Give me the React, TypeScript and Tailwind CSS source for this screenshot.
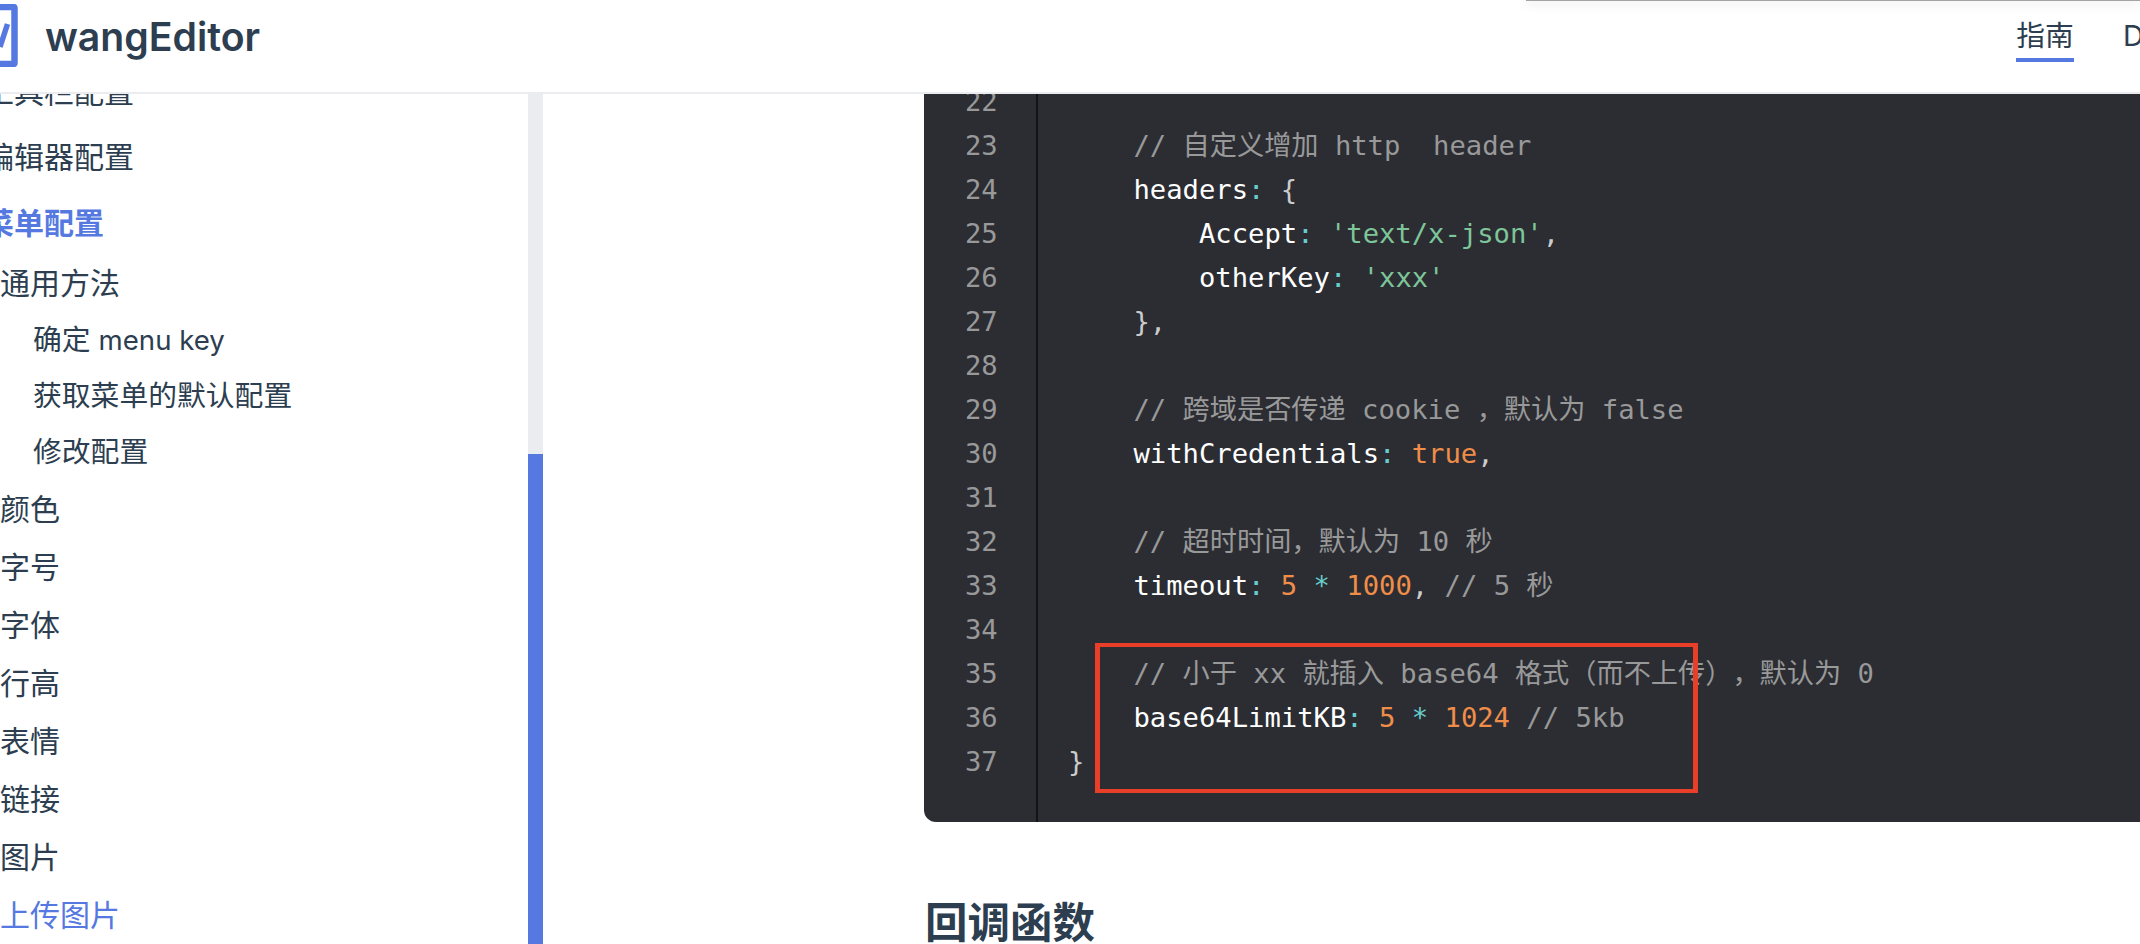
const comment = 'text-[#999999]';
const plain = 'text-white';
const punct = 'text-[#cccccc]';
const colon = 'text-[#67cdcc]';
const str = 'text-[#7ec699]';
const num = 'text-[#f08d49]';

type Token = [string, string];

const codeLines: Token[][] = [
  [],
  [['    // 自定义增加 http  header', comment]],
  [['    headers', plain], [':', colon], [' {', punct]],
  [['        Accept', plain], [':', colon], [" 'text/x-json'", str], [',', punct]],
  [['        otherKey', plain], [':', colon], [" 'xxx'", str]],
  [['    },', punct]],
  [],
  [['    // 跨域是否传递 cookie ，默认为 false', comment]],
  [['    withCredentials', plain], [':', colon], [' true', num], [',', punct]],
  [],
  [['    // 超时时间，默认为 10 秒', comment]],
  [['    timeout', plain], [':', colon], [' 5', num], [' *', colon], [' 1000', num], [',', punct], [' // 5 秒', comment]],
  [],
  [['    // 小于 xx 就插入 base64 格式（而不上传），默认为 0', comment]],
  [['    base64LimitKB', plain], [':', colon], [' 5', num], [' *', colon], [' 1024', num], [' // 5kb', comment]],
  [['}', punct]],
];

const sideRows = ['颜色', '字号', '字体', '行高', '表情', '链接', '图片'];

function Sidebar() {
  return (
    <aside className="flex h-full w-[528px] shrink-0 flex-col overflow-hidden bg-white text-[30px] text-[#2c3e50]">
      <div className="-ml-[16px] -mt-[31px] flex h-[58px] shrink-0 items-center leading-[58px]">工具栏配置</div>
      <div className="-ml-[16px] mt-[7px] flex h-[58px] shrink-0 items-center leading-[58px]">编辑器配置</div>
      <div className="-ml-[16px] mt-[8px] flex h-[58px] shrink-0 items-center font-semibold leading-[58px] text-[#5579e0]">菜单配置</div>
      <div className="mt-[2px] flex h-[58px] shrink-0 items-center leading-[58px]">通用方法</div>
      <div className="flex flex-col pl-[33px] text-[28.8px]">
        <div className="flex h-[56px] items-center leading-[56px]">确定 <span className="ml-[8px] text-[27.6px]">menu key</span></div>
        <div className="flex h-[56px] items-center leading-[56px]">获取菜单的默认配置</div>
        <div className="flex h-[56px] items-center leading-[56px]">修改配置</div>
      </div>
      {sideRows.map((t) => (
        <div key={t} className="flex h-[58px] shrink-0 items-center leading-[58px]">{t}</div>
      ))}
      <div className="flex h-[58px] shrink-0 items-center leading-[58px] text-[#5579e0]">上传图片</div>
    </aside>
  );
}

function CodeBlock() {
  return (
    <div className="relative -mt-[14px] flex h-[742px] rounded-bl-[12px] bg-[#2b2d33] font-['DejaVu_Sans_Mono','Noto_Sans_CJK_SC',monospace] text-[27.2px] leading-[44px] [text-spacing-trim:space-all]">
      <div className="w-[114px] shrink-0 border-r-2 border-[#111317] pl-[41px] text-[#999999]">
        {codeLines.map((_, i) => (
          <div key={i} className="h-[44px]">{22 + i}</div>
        ))}
      </div>
      <div className="pl-[30px]">
        {codeLines.map((tokens, i) => (
          <div key={i} className="h-[44px] whitespace-pre">
            {tokens.map(([text, cls], j) => (
              <span key={j} className={cls}>{text}</span>
            ))}
          </div>
        ))}
      </div>
      {/* annotation drawn over the screenshot */}
      <div className="absolute left-[171px] top-[563px] h-[150px] w-[603px] border-x-[5px] border-y-[4px] border-[#e93f28]" />
    </div>
  );
}

export default function App() {
  return (
    <div className="relative flex h-[944px] w-[2140px] flex-col overflow-hidden bg-white font-['Inter','Noto_Sans_CJK_SC',sans-serif]">
      <header className="flex h-[94px] shrink-0 items-start justify-between border-b-2 border-[#eaecef] bg-white pt-[4px]">
        <div className="flex items-center">
          <svg width="18" height="63" viewBox="0 0 18 63" className="shrink-0">
            <path d="M-6 3 H13 Q14.5 3 14.5 4.5 V58.5 Q14.5 60 13 60 H-6" fill="none" stroke="#5579e0" strokeWidth="6.5" />
            <path d="M7.5 20 L0 43" fill="none" stroke="#5579e0" strokeWidth="5.5" />
          </svg>
          <span className="ml-[27px] mt-[2px] text-[39.2px] font-semibold leading-none text-[#2c3e50]">wangEditor</span>
        </div>
        <nav className="flex items-start pt-[16px] text-[28.8px] text-[#2c3e50]">
          <div className="h-[42px] w-[58px] border-b-4 border-[#5579e0] text-center leading-[32px]">指南</div>
          <div className="ml-[49px] w-[17px] overflow-hidden leading-[32px]">D</div>
        </nav>
      </header>
      <div className="flex min-h-0 flex-1">
        <Sidebar />
        <div className="flex h-full w-[15px] shrink-0 flex-col bg-[#eaecef]">
          <div className="mt-[360px] flex-1 bg-[#5579e0]" />
        </div>
        <main className="min-w-0 flex-1 overflow-hidden pl-[381px]">
          <CodeBlock />
          <h3 className="ml-[1px] mt-[78px] text-[42.5px] font-semibold leading-[46px] text-[#2c3e50]">回调函数</h3>
        </main>
      </div>
      {/* edge of another window lying over the page */}
      <div className="absolute left-[1526px] right-0 top-0 h-px bg-[#a3a3a3] shadow-[0_2px_10px_rgba(0,0,0,0.35)]" />
    </div>
  );
}
